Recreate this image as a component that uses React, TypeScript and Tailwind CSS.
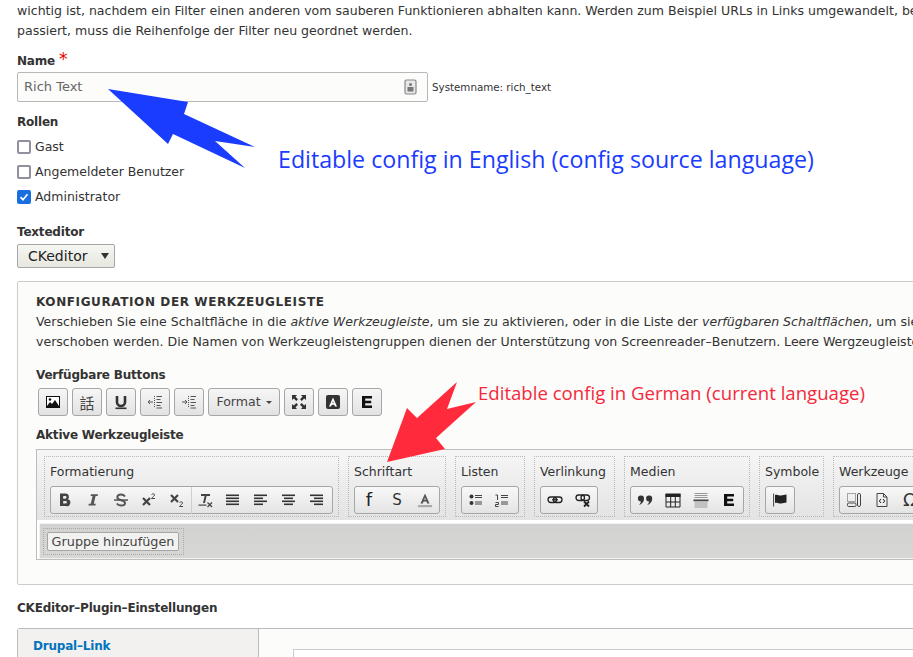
import React from "react";

const I = ({ w = 16, h = 16, children }: { w?: number; h?: number; children: React.ReactNode }) => (
  <svg width={w} height={h} viewBox={`0 0 ${w} ${h}`} className="block shrink-0" fill="none">
    {children}
  </svg>
);
const D = "#333";
const Lines = ({ kind }: { kind: "j" | "l" | "c" | "r" }) => {
  const rows = [0, 1, 2, 3].map((i) => {
    const short = i % 2 === 1 && kind !== "j";
    const w = short ? 9 : 13;
    const x = kind === "r" ? 14 - w : kind === "c" ? (14 - w) / 2 + 0.5 : 1;
    const xx = kind === "j" ? 1 : x;
    return <rect key={i} x={xx} y={2.5 + i * 3} width={kind === "j" ? 13 : w} height="1.6" fill={D} />;
  });
  return <I>{rows}</I>;
};
const Indent = ({ right }: { right?: boolean }) => (
  <I>
    <g stroke="#555" strokeWidth="1">
      <path d="M7.500 2v12" strokeDasharray="1 1" />
      <path d="M9.500 2.500h5.500M9.500 5.500h4M9.500 8.500h5.500M9.500 11.500h4M9.500 14h5.500" />
      {right ? <path d="M1 8h5M4 6l2 2-2 2" /> : <path d="M1 8h5M3 6L1 8l2 2" />}
    </g>
  </I>
);
const Icons: Record<string, React.ReactNode> = {
  image: (
    <I>
      <rect x="1" y="2" width="14" height="12" fill="#111" />
      <rect x="2" y="3" width="12" height="9" fill="#fff" />
      <path d="M2 12l3-4 2 2 3-4 4 6z" fill="#111" />
      <circle cx="5" cy="5.500" r="1.300" fill="#111" />
    </I>
  ),
  lang: <span className="text-[15px] leading-none text-[#444]" style={{ fontFamily: '"Noto Sans CJK TC", sans-serif' }}>話</span>,
  u: (
    <I>
      <path d="M4 2v6a4 4 0 0 0 8 0V2" stroke="#333" strokeWidth="2.600" />
      <rect x="2.500" y="13.500" width="11" height="1.600" fill="#333" />
    </I>
  ),
  full: (
    <I>
      <path d="M1 1h5L4.500 2.800 7 5.300 5.300 7 2.800 4.500 1 6zM15 1v5l-1.800-1.500L10.700 7 9 5.300l2.500-2.500L10 1zM1 15v-5l1.800 1.500L5.300 9 7 10.700l-2.500 2.500L6 15zM15 15h-5l1.500-1.800L9 10.700 10.700 9l2.500 2.500L15 10z" fill="#333" />
    </I>
  ),
  a: (
    <I>
      <rect x="1" y="1" width="14" height="14" rx="2" fill="#333" />
      <path d="M8 3.500L4 12.500h2.100l.7-1.800h2.400l.7 1.800H12zM7.400 9L8 7.200 8.600 9z" fill="#fff" fillRule="evenodd" />
    </I>
  ),
  e: (
    <I>
      <path d="M3 2h10v2.500H6.200v2.200h6v2.500h-6v2.300H13V14H3z" fill="#111" />
    </I>
  ),
  b: (
    <I>
      <path d="M3 1.500h5.500a3.200 3.200 0 0 1 2.200 5.700 3.500 3.500 0 0 1-1.700 6.800H3zM6.200 4v2.700h2a1.350 1.350 0 0 0 0-2.700zM6.200 9v2.600h2.400a1.300 1.300 0 0 0 0-2.600z" fill="#444" fillRule="evenodd" />
    </I>
  ),
  i: (
    <I>
      <path d="M6 2.200h7l-.4 1.800h-2l-1.800 7.800h2l-.4 1.800H3.400l.4-1.800h2L7.600 4h-2z" fill="#555" />
    </I>
  ),
  s: (
    <I>
      <path d="M12 4.500C11 3 9.500 2.500 8 2.500c-2 0-3.700 1-3.700 2.800C4.300 9 12 7.500 12 11c0 1.700-1.700 2.500-4 2.500-1.800 0-3.300-.7-4.200-2" stroke="#555" strokeWidth="2" />
      <rect x="1" y="7.300" width="14" height="1.500" fill="#555" />
    </I>
  ),
  sup: (
    <I>
      <path d="M2 6l7 7M9 6l-7 7" stroke="#444" strokeWidth="2.200" />
      <path d="M10.500 2.500c1-1 3-1 3 .5 0 1-2 2-3 3.500h3.500" stroke="#444" strokeWidth="1" />
    </I>
  ),
  sub: (
    <I>
      <path d="M2 3l7 7M9 3l-7 7" stroke="#444" strokeWidth="2.200" />
      <path d="M10.500 10.500c1-1 3-1 3 .5 0 1-2 2-3 3.500h3.500" stroke="#444" strokeWidth="1" />
    </I>
  ),
  tx: (
    <I>
      <path d="M4 2h9v2h-3.400L8 11H6l1.600-7H4z" fill="#444" />
      <rect x="1.500" y="12.500" width="8" height="1.200" fill="#444" />
      <path d="M10.500 10.500l4.500 4.500M15 10.500L10.500 15" stroke="#444" strokeWidth="1.300" />
    </I>
  ),
  j: <Lines kind="j" />,
  l: <Lines kind="l" />,
  c: <Lines kind="c" />,
  r: <Lines kind="r" />,
  ul: (
    <I>
      <circle cx="3.500" cy="4.500" r="2" fill="#333" />
      <circle cx="3.500" cy="11" r="2" fill="#333" />
      <path d="M7 3.500h7M7 5.500h7M7 10h7M7 12h7" stroke="#444" />
    </I>
  ),
  ol: (
    <I>
      <path d="M1.500 3H3.500V8M1.500 10.500h3v2h-3v2h3" stroke="#444" />
      <path d="M7 3.500h7M7 5.500h7M7 10h7M7 12h7" stroke="#444" />
    </I>
  ),
  link: (
    <I>
      <rect x="1" y="5" width="8.500" height="5.500" rx="2.700" stroke="#222" strokeWidth="1.300" />
      <rect x="6.500" y="5" width="8.500" height="5.500" rx="2.700" stroke="#222" strokeWidth="1.300" />
      <path d="M5 7.750h6" stroke="#222" strokeWidth="1.200" />
    </I>
  ),
  unlink: (
    <I>
      <rect x="1" y="3" width="8.500" height="5.500" rx="2.700" stroke="#222" strokeWidth="1.300" />
      <rect x="6" y="3" width="8.500" height="5.500" rx="2.700" stroke="#222" strokeWidth="1.300" />
      <path d="M9 9.500l5 5M14 9.500l-5 5" stroke="#222" strokeWidth="1.800" />
    </I>
  ),
  quote: (
    <I w={16} h={16}>
      <path d="M3.800 3.500a3 3 0 0 1 3.200 3c0 3.500-2.500 5.800-5 6.500 1-1.200 1.800-2.200 2-3.500a3 3 0 0 1-.2-6zM12 3.500a3 3 0 0 1 3.200 3c0 3.500-2.500 5.800-5 6.500 1-1.200 1.800-2.200 2-3.500a3 3 0 0 1-.2-6z" fill="#333" />
    </I>
  ),
  table: (
    <I>
      <rect x="0.500" y="1.500" width="15" height="3.500" fill="#222" />
      <path d="M1 2v13h14V2M1 10h14M5.700 5v10M10.300 5v10" stroke="#222" />
    </I>
  ),
  hr: (
    <I>
      <path d="M1.500 1.500h13M1.500 3.500h13M1.500 5.500h13M1.500 11h13M1.500 13h13M1.500 15h13" stroke="#999" />
      <rect x="0.500" y="7.500" width="15" height="1.800" fill="#444" />
    </I>
  ),
  flag: (
    <I>
      <rect x="1" y="1.500" width="1.100" height="13" fill="#555" />
      <path d="M3 3c2.500-1 4 .8 6 .6 2-.2 3.500-1 5.500-1v8c-2 0-3.500.9-5.500 1-2 .1-3.500-1.400-6-.6z" fill="#222" />
    </I>
  ),
  f: <span className="text-[18px] leading-none text-[#222]">f</span>,
  S: <span className="text-[15px] leading-none text-[#333]">S</span>,
  color: (
    <I>
      <path d="M8 1.500L3.500 11.500h2.300l.8-2h2.800l.8 2h2.300zM7.200 7.700L8 5.500l.8 2.200z" fill="#555" fillRule="evenodd" />
      <rect x="1" y="13" width="14" height="2.200" fill="#aaa" />
    </I>
  ),
  block: (
    <I>
      <path d="M1.500 1.500h8v8h-8z" stroke="#555" strokeDasharray="1 1" />
      <rect x="1.500" y="11" width="8.500" height="3.500" rx="1.200" stroke="#444" />
      <rect x="11.500" y="1.500" width="3" height="13" rx="1.400" stroke="#444" />
    </I>
  ),
  source: (
    <I>
      <path d="M3 1.500h6.500l3.500 3.500v9.500H3z" stroke="#444" />
      <path d="M9.500 1.500V5H13" stroke="#444" />
      <path d="M7 7L5.300 9 7 11M9 7l1.700 2L9 11" stroke="#222" />
    </I>
  ),
  omega: <span className="text-[18px] leading-none text-[#333]">Ω</span>,
};

const Btn = ({ icon, children }: { icon?: string; children?: React.ReactNode }) => (
  <div className="w-[30px] h-[28px] flex items-center justify-center rounded-[3px] border border-[#a6a6a6] bg-gradient-to-b from-[#f6f6f6] to-[#e2e2e2]">
    {icon ? Icons[icon] : children}
  </div>
);

const Group = ({
  label,
  w,
  boxW,
  icons,
  sep,
  gap = "gap-[12px]",
}: {
  label: string;
  w: string;
  boxW: string;
  icons: string[];
  sep?: number;
  gap?: string;
}) => (
  <div className={`${w} shrink-0 h-[61px] border border-dotted border-[#b8b8b8] pl-[5px] pt-[7px]`}>
    <div className="text-[12.5px] leading-[16px] text-[#333] whitespace-nowrap h-[22px]">{label}</div>
    <div className={`${boxW} h-[28px] rounded-[3px] border border-[#a6a6a6] bg-gradient-to-b from-[#f8f8f8] to-[#e4e4e4] flex items-center pl-[6px] ${gap}`}>
      {icons.map((n, i) => (
        <React.Fragment key={n}>
          {sep === i && <div className="w-px h-[27px] -mx-[6.5px] bg-[#cfcfcf]" />}
          <div className="w-[16px] h-[16px] flex items-center justify-center shrink-0">{Icons[n]}</div>
        </React.Fragment>
      ))}
    </div>
  </div>
);

const Check = ({ label, on }: { label: string; on?: boolean }) => (
  <div className="flex items-center h-[25px] gap-[4px]">
    {on ? (
      <div className="w-[14px] h-[14px] rounded-[2px] bg-[#1a6fe0] flex items-center justify-center">
        <svg width="10" height="10" viewBox="0 0 10 10" fill="none">
          <path d="M1.500 5.200L4 7.700 8.500 2.300" stroke="#fff" strokeWidth="1.700" />
        </svg>
      </div>
    ) : (
      <div className="w-[14px] h-[14px] rounded-[2px] border-2 border-[#8f8f9d] bg-white" />
    )}
    <span className="text-[12.5px] text-[#333]">{label}</span>
  </div>
);

export default function App() {
  return (
    <div
      className="relative w-[913px] h-[657px] overflow-hidden bg-white text-[#333] text-[12.55px] leading-[20px]"
      style={{ fontFamily: '"DejaVu Sans", Verdana, sans-serif' }}
    >
      <div className="w-[1200px] pl-[17px] pt-px">
        <p className="whitespace-nowrap">
          wichtig ist, nachdem ein Filter einen anderen vom sauberen Funktionieren abhalten kann. Werden zum Beispiel URLs in Links umgewandelt, bevor
        </p>
        <p className="whitespace-nowrap">passiert, muss die Reihenfolge der Filter neu geordnet werden.</p>

        <div className="mt-[10px] h-[21px] font-bold text-[12px] tracking-[-0.2px]">
          Name <span className="text-[#e00] font-normal text-[17px] leading-none">*</span>
        </div>
        <div className="flex items-center gap-[4px]">
          <div className="w-[411px] h-[30px] rounded-[2px] border border-[#b8b8b8] bg-[#fcfcfa] flex items-center justify-between pl-[6px] pr-[10px]">
            <span className="text-[#666] text-[13px]">Rich Text</span>
            <svg width="13" height="16" viewBox="0 0 13 16" fill="none">
              <rect x="1" y="1" width="11" height="14" rx="1.500" fill="#e8e8e8" stroke="#888" strokeWidth="1.200" />
              <circle cx="6.500" cy="5.500" r="1.500" fill="#777" />
              <rect x="3.500" y="8" width="6" height="4.500" fill="#777" />
            </svg>
          </div>
          <span className="text-[10.3px] text-[#333]">Systemname: rich_text</span>
        </div>

        <div className="mt-[10px] font-bold text-[12px] tracking-[-0.2px]">Rollen</div>
        <div className="mt-[2px]">
          <Check label="Gast" />
          <Check label="Angemeldeter Benutzer" />
          <Check label="Administrator" on />
        </div>

        <div className="mt-[13px] font-bold text-[12px] tracking-[-0.2px]">Texteditor</div>
        <div className="mt-[2px] w-[98px] h-[24px] rounded-[2px] border border-[#a6a6a6] bg-gradient-to-b from-[#f6f6f3] to-[#e7e7df] flex items-center pl-[10px] text-[14px] text-[#222] relative">
          CKeditor
          <span className="absolute right-[5px] top-[8px] w-0 h-0 border-l-[4px] border-r-[4px] border-t-[6px] border-l-transparent border-r-transparent border-t-[#333]" />
        </div>

        <div className="mt-[13px] h-[304px] w-[1100px] rounded-[2px] border border-[#ccc] bg-[#fcfcfa] pl-[18px] pt-[10px]">
          <div className="font-bold uppercase text-[12px] tracking-[0.6px] text-[#333] leading-[20px]">Konfiguration der Werkzeugleiste</div>
          <p className="whitespace-nowrap">
            Verschieben Sie eine Schaltfläche in die <em>aktive Werkzeugleiste</em>, um sie zu aktivieren, oder in die Liste der <em>verfügbaren Schaltflächen</em>, um sie zu deaktivieren. Schaltflächen
          </p>
          <p className="whitespace-nowrap">
            verschoben werden. Die Namen von Werkzeugleistengruppen dienen der Unterstützung von Screenreader–Benutzern. Leere Wergzeugleistengruppen
          </p>

          <div className="mt-[13px] font-bold text-[12px] tracking-[-0.2px]">Verfügbare Buttons</div>
          <div className="mt-[3px] ml-[2px] flex gap-[4px] h-[28px]">
            <Btn icon="image" />
            <Btn icon="lang" />
            <Btn icon="u" />
            <Btn><Indent /></Btn>
            <Btn><Indent right /></Btn>
            <div className="w-[72px] h-[28px] flex items-center justify-center gap-[5px] rounded-[3px] border border-[#a6a6a6] bg-gradient-to-b from-[#f6f6f6] to-[#e2e2e2] text-[#444]">
              Format
              <span className="w-0 h-0 border-l-[3px] border-r-[3px] border-t-[3px] border-l-transparent border-r-transparent border-t-[#444]" />
            </div>
            <Btn icon="full" />
            <Btn icon="a" />
            <Btn icon="e" />
          </div>

          <div className="mt-[9px] font-bold text-[12px] tracking-[-0.2px]">Aktive Werkzeugleiste</div>
          <div className="mt-[4px] h-[111px] border border-[#bdbdbd] bg-[#fff]">
            <div className="h-[70px] bg-gradient-to-b from-[#f6f6f6] to-[#e3e3e3] flex pt-[6px] pl-[7px] gap-[9px]">
              <Group label="Formatierung" w="w-[295px]" boxW="w-[283px]" icons={["b", "i", "s", "sup", "sub", "tx", "j", "l", "c", "r"]} sep={5} />
              <Group label="Schriftart" w="w-[98px]" boxW="w-[86px]" icons={["f", "S", "color"]} />
              <Group label="Listen" w="w-[70px]" boxW="w-[58px]" icons={["ul", "ol"]} gap="gap-[10px]" />
              <Group label="Verlinkung" w="w-[81px]" boxW="w-[58px]" icons={["link", "unlink"]} gap="gap-[12px]" />
              <Group label="Medien" w="w-[126px]" boxW="w-[114px]" icons={["quote", "table", "hr", "e"]} />
              <Group label="Symbole" w="w-[65px]" boxW="w-[30px]" icons={["flag"]} />
              <Group label="Werkzeuge" w="w-[140px]" boxW="w-[130px]" icons={["block", "source", "omega"]} />
            </div>
            <div className="h-[3px] bg-white" />
            <div className="ml-[2px] h-[36px] border border-[#f2f2f2] bg-gradient-to-b from-[#d2d3d1] to-[#d7d8d6] pl-[3px] pt-[4px]">
              <div className="w-[141px] h-[27px] border border-dotted border-[#aaa] pl-[3px] pt-[3px]">
                <div className="w-[132px] h-[19px] rounded-[2px] border border-[#a6a6a6] bg-[#f2f2f0] flex items-center justify-center text-[12.8px] text-[#444]">
                  Gruppe hinzufügen
                </div>
              </div>
            </div>
          </div>
        </div>

        <div className="mt-[13px] font-bold text-[12px] tracking-[-0.2px]">CKEditor–Plugin–Einstellungen</div>
        <div className="mt-[10px] h-[40px] w-[1100px] rounded-tl-[3px] border border-[#bbb] border-b-0 flex">
          <div className="w-[241px] h-full bg-[#f2f1ef] border-r border-[#bbb] pl-[15px] pt-[7px] font-bold text-[12px] tracking-[-0.2px] text-[#0074bd]">Drupal–Link</div>
          <div className="flex-1 bg-[#fcfcfa] pl-[34px] pt-[20px]">
            <div className="h-[20px] border border-[#ccc] bg-white" />
          </div>
        </div>
      </div>

      <svg width="913" height="657" viewBox="0 0 913 657" className="absolute left-0 top-0 pointer-events-none">
        <polygon points="108,89 188,102 184,114 255,147 215,141 245,168 173,134 168,144" fill="#1a3cff" />
        <polygon points="387,462 407,408 417,418 457,382 447,409 476,402 436,438 445,449" fill="#ff2a3c" />
      </svg>
      <div className="absolute left-[278px] top-[143px] text-[23.2px] leading-[32px] text-[#1a3cff] whitespace-nowrap" style={{ fontFamily: '"Open Sans", sans-serif' }}>
        Editable config in English (config source language)
      </div>
      <div className="absolute left-[478px] top-[380px] text-[18.6px] leading-[26px] text-[#f5283c] whitespace-nowrap" style={{ fontFamily: '"Open Sans", sans-serif' }}>
        Editable config in German (current language)
      </div>
    </div>
  );
}
